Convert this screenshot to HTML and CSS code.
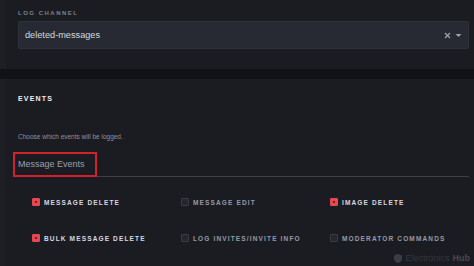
FILE: index.html
```html
<!DOCTYPE html>
<html lang="en">
<head>
    <meta charset="UTF-8">
    <title>Logging Settings</title>
    <link rel="stylesheet" href="styles.css">
</head>
<body>
    <div class="settings">
        <!-- Log channel picker -->
        <section class="panel channel-panel">
            <label class="field-label">Log Channel</label>
            <div class="select">
                <span class="select-value">deleted-messages</span>
                <span class="select-controls">
                    <svg width="7" height="7" viewBox="0 0 7 7"><path d="M1 1L6 6M6 1L1 6" stroke="#9ca0ab" stroke-width="1.3"/></svg>
                    <svg width="7" height="5" viewBox="0 0 7 5"><path d="M0.5 1L3.5 4L6.5 1Z" fill="#9ca0ab"/></svg>
                </span>
            </div>
        </section>

        <!-- Event toggles -->
        <section class="panel events-panel">
            <h3 class="events-title">Events</h3>
            <p class="events-desc">Choose which events will be logged.</p>

            <div class="tabs">
                <div class="tab active">Message Events</div>
            </div>

            <div class="event-grid">
                <div class="event-item checked"><span class="box"></span>Message Delete</div>
                <div class="event-item"><span class="box"></span>Message Edit</div>
                <div class="event-item checked"><span class="box"></span>Image Delete</div>
                <div class="event-item checked"><span class="box"></span>Bulk Message Delete</div>
                <div class="event-item"><span class="box"></span>Log Invites/Invite Info</div>
                <div class="event-item"><span class="box"></span>Moderator Commands</div>
            </div>

            <div class="watermark">
                <svg width="8" height="9" viewBox="0 0 8 9"><path d="M4 0L8 1.5V4.5C8 7 6 8.4 4 9C2 8.4 0 7 0 4.5V1.5Z" fill="#3a3d47"/></svg>
                <span>Electronics</span> <b>Hub</b>
            </div>
        </section>
    </div>
</body>
</html>
```

FILE: styles.css
```css
body {
    margin: 0;
    background-color: #111216;
    font-family: 'Liberation Sans', Arial, sans-serif;
}

.settings {
    display: flex;
    flex-direction: column;
    gap: 10px;
    height: 266px;
    overflow: hidden;
}

.panel {
    background-color: #1b1c21;
    box-shadow: inset 6px 0 #1e1f25;
    padding: 0 5px 0 18px;
}

/* Log channel */
.channel-panel {
    height: 69px;
    padding-top: 9px;
    box-sizing: border-box;
}

.field-label {
    display: block;
    font-size: 6px;
    line-height: 8px;
    font-weight: bold;
    letter-spacing: 1.5px;
    text-transform: uppercase;
    color: #7d8292;
}

.select {
    margin-top: 4px;
    height: 28px;
    box-sizing: border-box;
    display: flex;
    align-items: center;
    justify-content: space-between;
    padding: 0 6px;
    background-color: #272a33;
    border: 1px solid #2e313a;
    border-radius: 2px;
}

.select-value {
    font-size: 9.2px;
    color: #d8d9de;
}

.select-controls {
    display: flex;
    align-items: center;
    gap: 4px;
}

/* Events */
.events-panel {
    flex: 1;
    padding-top: 15px;
    position: relative;
}

.events-title {
    margin: 0;
    font-size: 7px;
    line-height: 10px;
    font-weight: bold;
    letter-spacing: 1.2px;
    text-transform: uppercase;
    color: #f0f1f4;
}

.events-desc {
    margin: 28px 0 0;
    font-size: 6.5px;
    line-height: 10px;
    color: #8e92a3;
}

.tabs {
    display: flex;
    margin: 10px 0 0 -5px;
    border-bottom: 1px solid #3d3f47;
}

.tab {
    height: 25px;
    box-sizing: border-box;
    margin-bottom: -1px;
    padding: 0 10px 0 3px;
    font-size: 9px;
    line-height: 21px;
    color: #9a9fb5;
}

.tab.active {
    border: 2px solid #d1212a;
}

.event-grid {
    display: grid;
    grid-template-columns: 149px 149px auto;
    row-gap: 26px;
    margin: 20px 0 0 14px;
}

.event-item {
    display: flex;
    align-items: center;
    gap: 4px;
    height: 10px;
    font-size: 6.5px;
    font-weight: bold;
    letter-spacing: 1.15px;
    text-transform: uppercase;
    color: #979aa6;
}

.box {
    width: 8px;
    height: 8px;
    box-sizing: border-box;
    border: 1px solid #3a3c44;
    background-color: #25272d;
    border-radius: 1px;
    display: flex;
    align-items: center;
    justify-content: center;
}

.event-item.checked {
    color: #d8d9e0;
}

.event-item.checked .box {
    background-color: #e5484f;
    border-color: #e5484f;
}

.event-item.checked .box::after {
    content: "";
    width: 2px;
    height: 2px;
    background-color: #7a1b22;
}

/* faint watermark in the corner */
.watermark {
    position: absolute;
    right: 4px;
    bottom: 3px;
    display: flex;
    align-items: center;
    gap: 3px;
    font-size: 9px;
    color: #33363f;
}

.watermark b {
    color: #454955;
}
```
